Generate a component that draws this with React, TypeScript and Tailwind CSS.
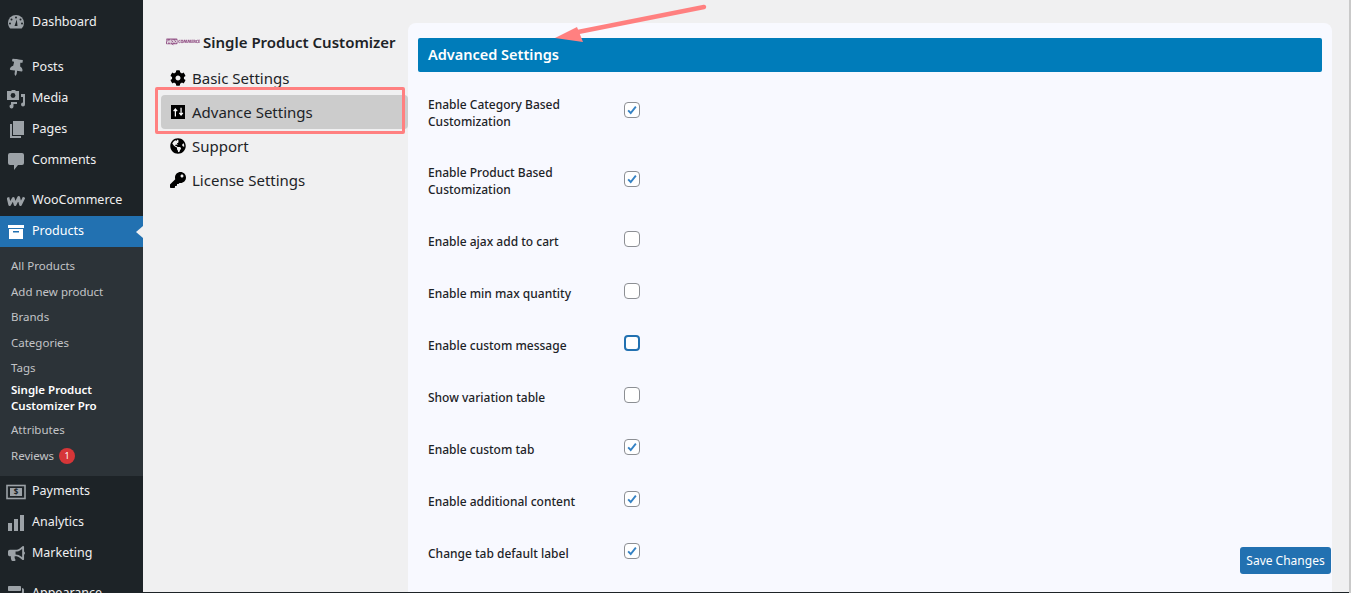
import { FaCog, FaGlobeAmericas, FaKey, FaThumbtack, FaPaintRoller, FaBullhorn } from "react-icons/fa";
import { SiWoocommerce } from "react-icons/si";

const FONT = "font-['Noto_Sans',sans-serif]";

function DashIcon() {
  return (
    <svg viewBox="0 0 20 20" className="h-[20px] w-[20px] fill-[#9ca2a7]">
      <path d="M10 3a8 8 0 0 0-8 8c0 2.2.9 4.2 2.3 5.6h11.4A8 8 0 0 0 18 11a8 8 0 0 0-8-8z" />
      <g className="fill-[#1d2327]">
        <circle cx="10" cy="5.5" r="1" />
        <circle cx="5.5" cy="7.5" r="1" />
        <circle cx="14.5" cy="7.5" r="1" />
        <circle cx="4" cy="11.5" r="1" />
        <circle cx="16" cy="11.5" r="1" />
        <path d="M10.8 7.5 11.5 14h-3z" />
      </g>
    </svg>
  );
}

function MediaIcon() {
  return (
    <svg viewBox="0 0 20 20" className="h-[20px] w-[20px] fill-[#9ca2a7]">
      <path d="M1 2h4l1-1h3l1 1h3v9H1z" />
      <circle cx="7" cy="6.5" r="2.4" className="fill-[#1d2327]" />
      <path d="M15 5h4v10.5a2 2 0 1 1-2-2V8h-2zM5 13h6v2H7.5v2.5a2 2 0 1 1-2.5-2z" />
    </svg>
  );
}

function PagesIcon() {
  return (
    <svg viewBox="0 0 20 20" className="h-[20px] w-[20px] fill-[#9ca2a7]">
      <path d="M7 1h11v14H7z" />
      <path d="M4 4h2v12h9v2H4z" />
    </svg>
  );
}

function CommentIcon() {
  return (
    <svg viewBox="0 0 20 20" className="h-[20px] w-[20px] fill-[#9ca2a7]">
      <path d="M4 2h12a2 2 0 0 1 2 2v8a2 2 0 0 1-2 2h-4l-4 5v-5H4a2 2 0 0 1-2-2V4a2 2 0 0 1 2-2z" />
    </svg>
  );
}

function WooIcon() {
  return (
    <svg viewBox="0 0 20 20" className="h-[18px] w-[18px] stroke-[#9ca2a7]" fill="none" strokeWidth="3" strokeLinejoin="round">
      <path d="M1 6l2 8 4-7 2 7 4-8 2 8 4-8" />
    </svg>
  );
}

function ProductsIcon() {
  return (
    <svg viewBox="0 0 20 20" className="h-[20px] w-[20px] fill-white">
      <path d="M2 3h16v3H2z" />
      <path d="M3 7h14v10H3zM7 9v1.5h6V9z" fillRule="evenodd" />
    </svg>
  );
}

function PaymentsIcon() {
  return (
    <svg viewBox="0 0 20 20" className="h-[20px] w-[20px]" fill="none">
      <rect x="1" y="3.5" width="18" height="13" className="stroke-[#9ca2a7]" strokeWidth="1.6" />
      <rect x="4" y="6" width="12" height="8" className="fill-[#9ca2a7]" />
      <text x="10" y="13" textAnchor="middle" fontSize="8" fontWeight="700" className="fill-[#1d2327]">$</text>
    </svg>
  );
}

function AnalyticsIcon() {
  return (
    <svg viewBox="0 0 20 20" className="h-[20px] w-[20px] fill-[#9ca2a7]">
      <path d="M2 10h4v8H2zM8 6h4v12H8zM14 2h4v16h-4z" />
    </svg>
  );
}

function AdvanceIcon() {
  return (
    <svg viewBox="0 0 16 16" className="h-[14px] w-[14px]">
      <rect width="16" height="16" fill="#000" />
      <path d="M4.5 13V5M2.5 7l2-2.5 2 2.5M11 3v8M9 9l2 2.5L13 9" stroke="#fff" strokeWidth="1.4" fill="none" transform="rotate(180 8 8) translate(0 0)" />
    </svg>
  );
}

const topMenu = [
  { label: "Dashboard", icon: <DashIcon />, h: "h-[30px]", mb: "mb-[15px]" },
  { label: "Posts", icon: <FaThumbtack className="h-[17px] w-[17px] rotate-[8deg] text-[#9ca2a7]" />, h: "h-[31px]", mb: "" },
  { label: "Media", icon: <MediaIcon />, h: "h-[31px]", mb: "" },
  { label: "Pages", icon: <PagesIcon />, h: "h-[31px]", mb: "" },
  { label: "Comments", icon: <CommentIcon />, h: "h-[31px]", mb: "mb-[9px]" },
  { label: "WooCommerce", icon: <WooIcon />, h: "h-[31px]", mb: "" },
];

const subMenu = [
  { label: "All Products", h: "h-[27px]" },
  { label: "Add new product", h: "h-[25px]" },
  { label: "Brands", h: "h-[26px]" },
  { label: "Categories", h: "h-[25px]" },
  { label: "Tags", h: "h-[25px]" },
];

const bottomMenu = [
  { label: "Payments", icon: <PaymentsIcon />, mb: "" },
  { label: "Analytics", icon: <AnalyticsIcon />, mb: "" },
  { label: "Marketing", icon: <FaBullhorn className="h-[17px] w-[17px] text-[#9ca2a7]" />, mb: "mb-[9px]" },
  { label: "Appearance", icon: <FaPaintRoller className="h-[16px] w-[16px] text-[#9ca2a7]" />, mb: "" },
];

const navItems = [
  { label: "Basic Settings", icon: <FaCog className="h-[16px] w-[16px] text-black" /> },
  { label: "Advance Settings", icon: <AdvanceIcon />, active: true },
  { label: "Support", icon: <FaGlobeAmericas className="h-[16px] w-[16px] text-black" /> },
  { label: "License Settings", icon: <FaKey className="h-[16px] w-[16px] text-black" /> },
];

const settings = [
  { label: "Enable Category Based Customization", checked: true, h: "h-[68px]" },
  { label: "Enable Product Based Customization", checked: true, h: "h-[69px]" },
  { label: "Enable ajax add to cart", checked: false, h: "h-[52px]" },
  { label: "Enable min max quantity", checked: false, h: "h-[52px]" },
  { label: "Enable custom message", checked: false, focus: true, h: "h-[52px]" },
  { label: "Show variation table", checked: false, h: "h-[52px]" },
  { label: "Enable custom tab", checked: true, h: "h-[52px]" },
  { label: "Enable additional content", checked: true, h: "h-[52px]" },
  { label: "Change tab default label", checked: true, h: "h-[52px]" },
];

function Checkbox({ checked, focus }: { checked: boolean; focus?: boolean }) {
  return (
    <span
      className={
        focus
          ? "flex h-[16px] w-[16px] items-center justify-center rounded-[4px] border-2 border-[#2271b1] bg-white"
          : "flex h-[16px] w-[16px] items-center justify-center rounded-[4px] border border-[#8c8f94] bg-white"
      }
    >
      {checked && (
        <svg viewBox="0 0 14 14" className="h-[12px] w-[12px]" fill="none" stroke="#3582c4" strokeWidth="2.2">
          <path d="M2.5 7.5 5.5 10.5 11.5 3" />
        </svg>
      )}
    </span>
  );
}

export default function App() {
  return (
    <div className={`relative flex h-[593px] w-[1351px] overflow-hidden bg-[#f0f0f1] ${FONT}`}>
      <aside className="w-[143px] shrink-0 bg-[#1d2327] pt-[7px] text-[12.5px] text-[#f0f0f1]">
        {topMenu.map((item) => (
          <div key={item.label} className={`flex items-center ${item.h} ${item.mb}`}>
            <span className="flex w-[32px] justify-center pl-[1px] pr-[1px]">{item.icon}</span>
            <span>{item.label}</span>
          </div>
        ))}
        <div className="relative flex h-[31px] items-center bg-[#2271b1] text-white">
          <span className="flex w-[32px] justify-center">
            <ProductsIcon />
          </span>
          <span>Products</span>
          <span className="absolute right-0 top-[10px] h-0 w-0 border-y-[6px] border-r-[7px] border-y-transparent border-r-[#f0f0f1]" />
        </div>
        <div className="h-[229px] bg-[#2c3338] pl-[11px] pt-[5px] text-[11.5px] text-[#c3c4c7]">
          {subMenu.map((item) => (
            <div key={item.label} className={`flex items-center ${item.h}`}>
              {item.label}
            </div>
          ))}
          <div className="py-[2px] text-[11.5px] font-semibold leading-[16px] text-white">
            Single Product
            <br />
            Customizer Pro
          </div>
          <div className="flex h-[27px] items-center">Attributes</div>
          <div className="flex h-[25px] items-center gap-[5px]">
            Reviews
            <span className="flex h-[16px] w-[16px] items-center justify-center rounded-full bg-[#d63638] text-[9px] text-white">
              1
            </span>
          </div>
        </div>
        <div className="pt-[0px]">
          {bottomMenu.map((item) => (
            <div key={item.label} className={`flex h-[31px] items-center ${item.mb}`}>
              <span className="flex w-[32px] justify-center">{item.icon}</span>
              <span>{item.label}</span>
            </div>
          ))}
        </div>
      </aside>

      <main className="flex min-w-0 flex-1 items-start pt-[23px]">
        <nav className="w-[265px] shrink-0 pl-[18px] text-[#1d2327]">
          <div className="flex h-[38px] items-center gap-[3px] pl-[5px] text-[15px] font-semibold text-[#1d2327]">
            <SiWoocommerce className="h-[34px] w-[34px] text-[#96588a]" />
            Single Product Customizer
          </div>
          <div className="mt-[0px]">
            {navItems.map((item) => (
              <div
                key={item.label}
                className={
                  item.active
                    ? "flex h-[34px] items-center gap-[6px] rounded-[4px] bg-[#cccccc] px-[9px] text-[15px]"
                    : "flex h-[34px] items-center gap-[6px] px-[9px] text-[15px]"
                }
              >
                <span className="flex w-[16px] justify-center">{item.icon}</span>
                {item.label}
              </div>
            ))}
          </div>
        </nav>

        <section className="h-[600px] w-[924px] shrink-0 rounded-t-[8px] bg-[#f8f9ff] px-[10px] pt-[15px]">
          <h2 className="flex h-[34px] items-center rounded-[2px] bg-[#007cba] pl-[10px] text-[14.5px] font-semibold text-white">
            Advanced Settings
          </h2>
          <div className="mt-[5px] pl-[10px]">
            {settings.map((row) => (
              <div key={row.label} className={`flex items-center ${row.h}`}>
                <label className="w-[196px] shrink-0 self-start pt-[20px] text-[12px] font-medium leading-[16.5px] text-[#1d2327]">
                  {row.label}
                </label>
                <span className="-mt-[2px]">
                  <Checkbox checked={row.checked} focus={row.focus} />
                </span>
              </div>
            ))}
          </div>
        </section>
      </main>

      {/* annotation overlays */}
      <div className="pointer-events-none absolute left-[155px] top-[87px] h-[47px] w-[250px] rounded-[2px] border-[3px] border-[#ff8080]" />
      <svg className="pointer-events-none absolute left-[550px] top-0" width="165" height="45" viewBox="0 0 165 45">
        <path d="M154 7 28 32" stroke="#ff8080" strokeWidth="4.5" strokeLinecap="round" />
        <path d="M5 38 L27 27 L33 42 Z" fill="#ff8080" />
      </svg>
      <button className="absolute left-[1240px] top-[547px] h-[27px] w-[91px] rounded-[3px] bg-[#2271b1] text-[12px] text-white">
        Save Changes
      </button>
      <div className="absolute right-0 top-0 h-full w-[2px] bg-[#c9c9c9]" />
      <div className="absolute bottom-0 left-[143px] h-[1px] w-[1206px] bg-[#1d2327]" />
    </div>
  );
}
